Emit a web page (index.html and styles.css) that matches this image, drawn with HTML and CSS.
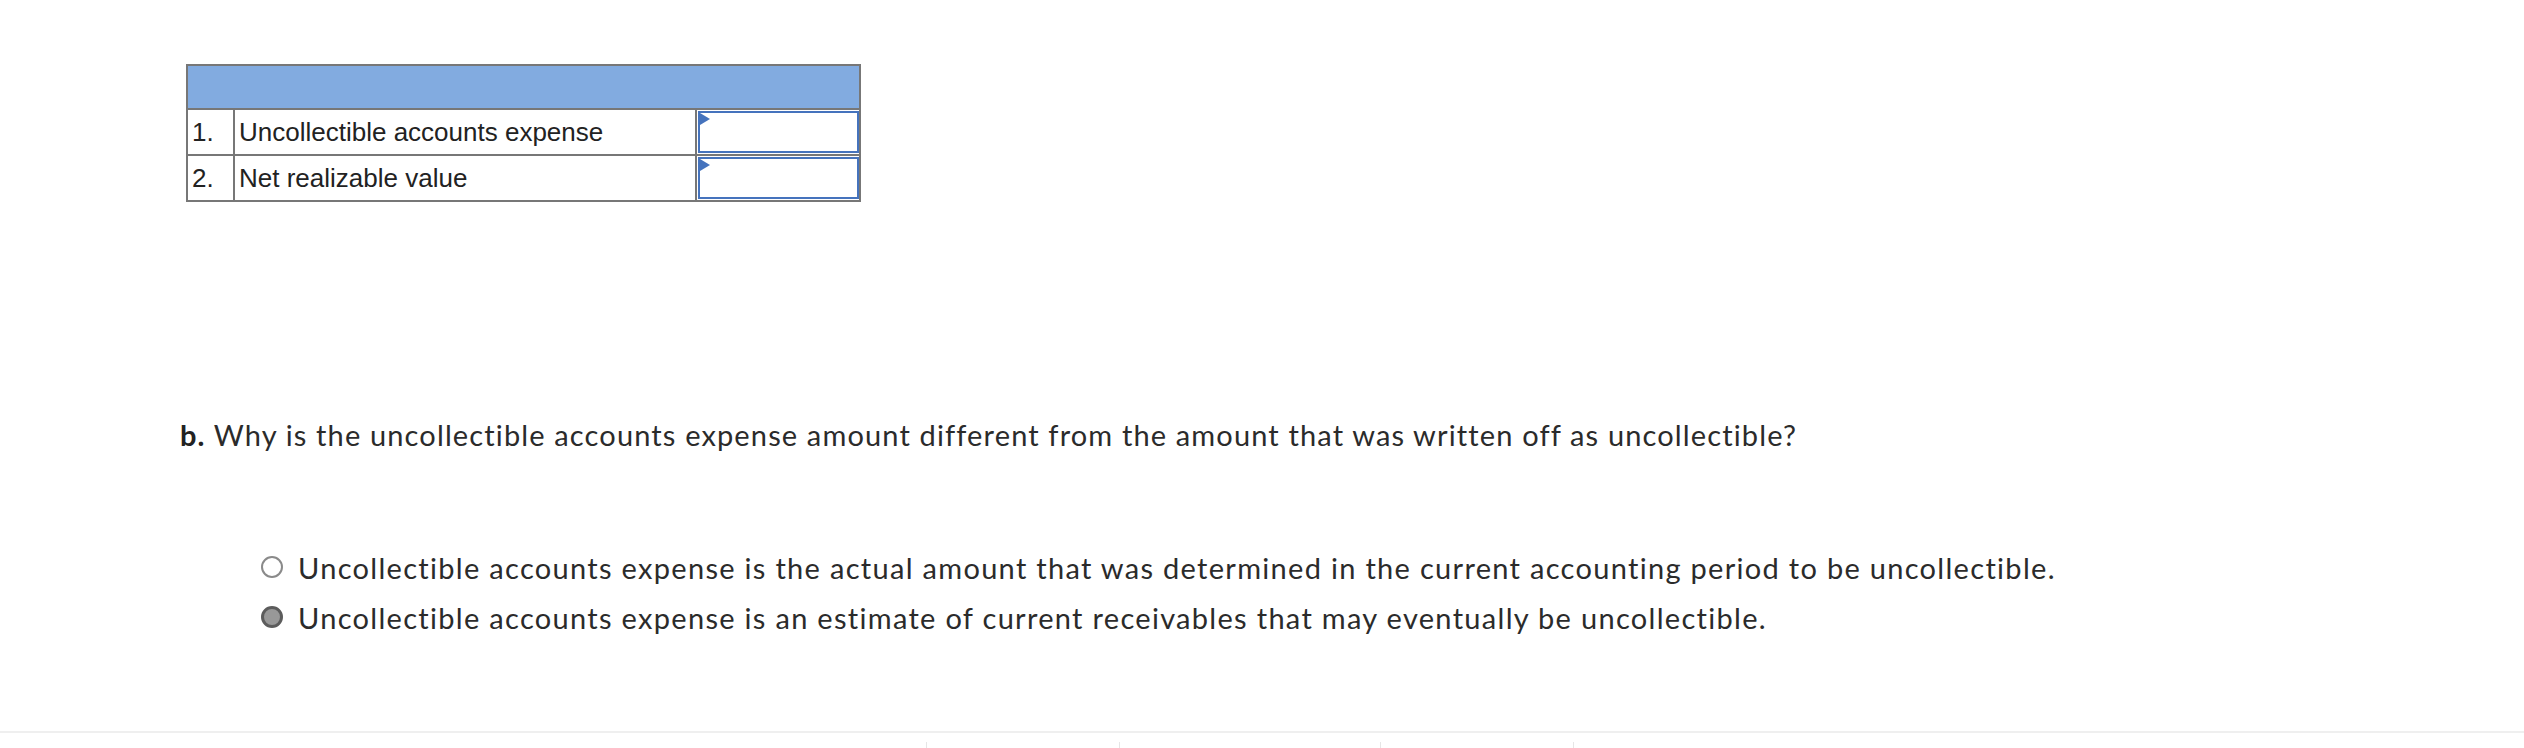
FILE: index.html
```html
<!DOCTYPE html>
<html>
<head>
<meta charset="utf-8">
<link rel="stylesheet" href="styles.css">
</head>
<body>
<div class="page">
  <table class="grid">
    <tr class="head"><td colspan="3"></td></tr>
    <tr>
      <td class="num">1.</td>
      <td class="label">Uncollectible accounts expense</td>
      <td class="entry"><div class="box"><span class="flag"></span></div></td>
    </tr>
    <tr>
      <td class="num">2.</td>
      <td class="label">Net realizable value</td>
      <td class="entry"><div class="box"><span class="flag"></span></div></td>
    </tr>
  </table>

  <p class="question"><b>b.</b> Why is the uncollectible accounts expense amount different from the amount that was written off as uncollectible?</p>

  <div class="options">
    <div class="option"><span class="radio"></span><span class="otext">Uncollectible accounts expense is the actual amount that was determined in the current accounting period to be uncollectible.</span></div>
    <div class="option"><span class="radio checked"></span><span class="otext">Uncollectible accounts expense is an estimate of current receivables that may eventually be uncollectible.</span></div>
  </div>

  <div class="footer">
    <span class="tick t1"></span><span class="tick t2"></span><span class="tick t3"></span><span class="tick t4"></span>
  </div>
</div>
</body>
</html>
```
FILE: styles.css
```css
html, body { margin: 0; padding: 0; background: #fff; }
.page { width: 2524px; height: 748px; position: relative; overflow: hidden; }

.grid {
  border-collapse: collapse;
  margin: 64px 0 0 186px;
  font-family: "Liberation Sans", Arial, sans-serif;
  font-size: 26px;
  color: #222;
}
.grid td { border: 2px solid #777; padding: 0; height: 42px; }
.grid .head td { background: #82abe0; }
.grid .num { width: 41px; padding-left: 4px; }
.grid .label { width: 456px; padding-left: 4px; }
.grid .entry { width: 161px; padding: 1px 0 1px 1px; }
.box { height: 38px; border: 2px solid #4573bd; position: relative; background: #fff; }
.flag {
  position: absolute; left: 0; top: 0;
  width: 0; height: 0;
  border-top: 6px solid transparent;
  border-bottom: 6px solid transparent;
  border-left: 10px solid #4573bd;
}

.question {
  margin: 215px 0 0 180px;
  font-family: Lato, "Open Sans", sans-serif;
  font-size: 29px;
  letter-spacing: 1.14px;
  color: #2b2b2b;
  line-height: 36px;
}
.question b { font-weight: 700; color: #222; }

.options { margin: 89px 0 0 261px; font-family: Lato, "Open Sans", sans-serif; font-size: 29px; letter-spacing: 1.3px; color: #2b2b2b; }
.option { display: flex; align-items: center; gap: 15px; height: 50px; }
.radio { width: 18px; height: 18px; border-radius: 50%; border: 2px solid #8a8a8a; background: #fff; flex: none; }
.radio.checked { width: 16px; height: 16px; border: 3px solid #5c5c5c; background: #989898; }

.footer { position: absolute; left: 0; right: 0; top: 731px; height: 17px; border-top: 2px solid #efefef; }
.tick { position: absolute; top: 9px; width: 1px; height: 8px; background: #e6e6e6; }
.t1 { left: 926px; } .t2 { left: 1119px; } .t3 { left: 1380px; } .t4 { left: 1573px; }
```
